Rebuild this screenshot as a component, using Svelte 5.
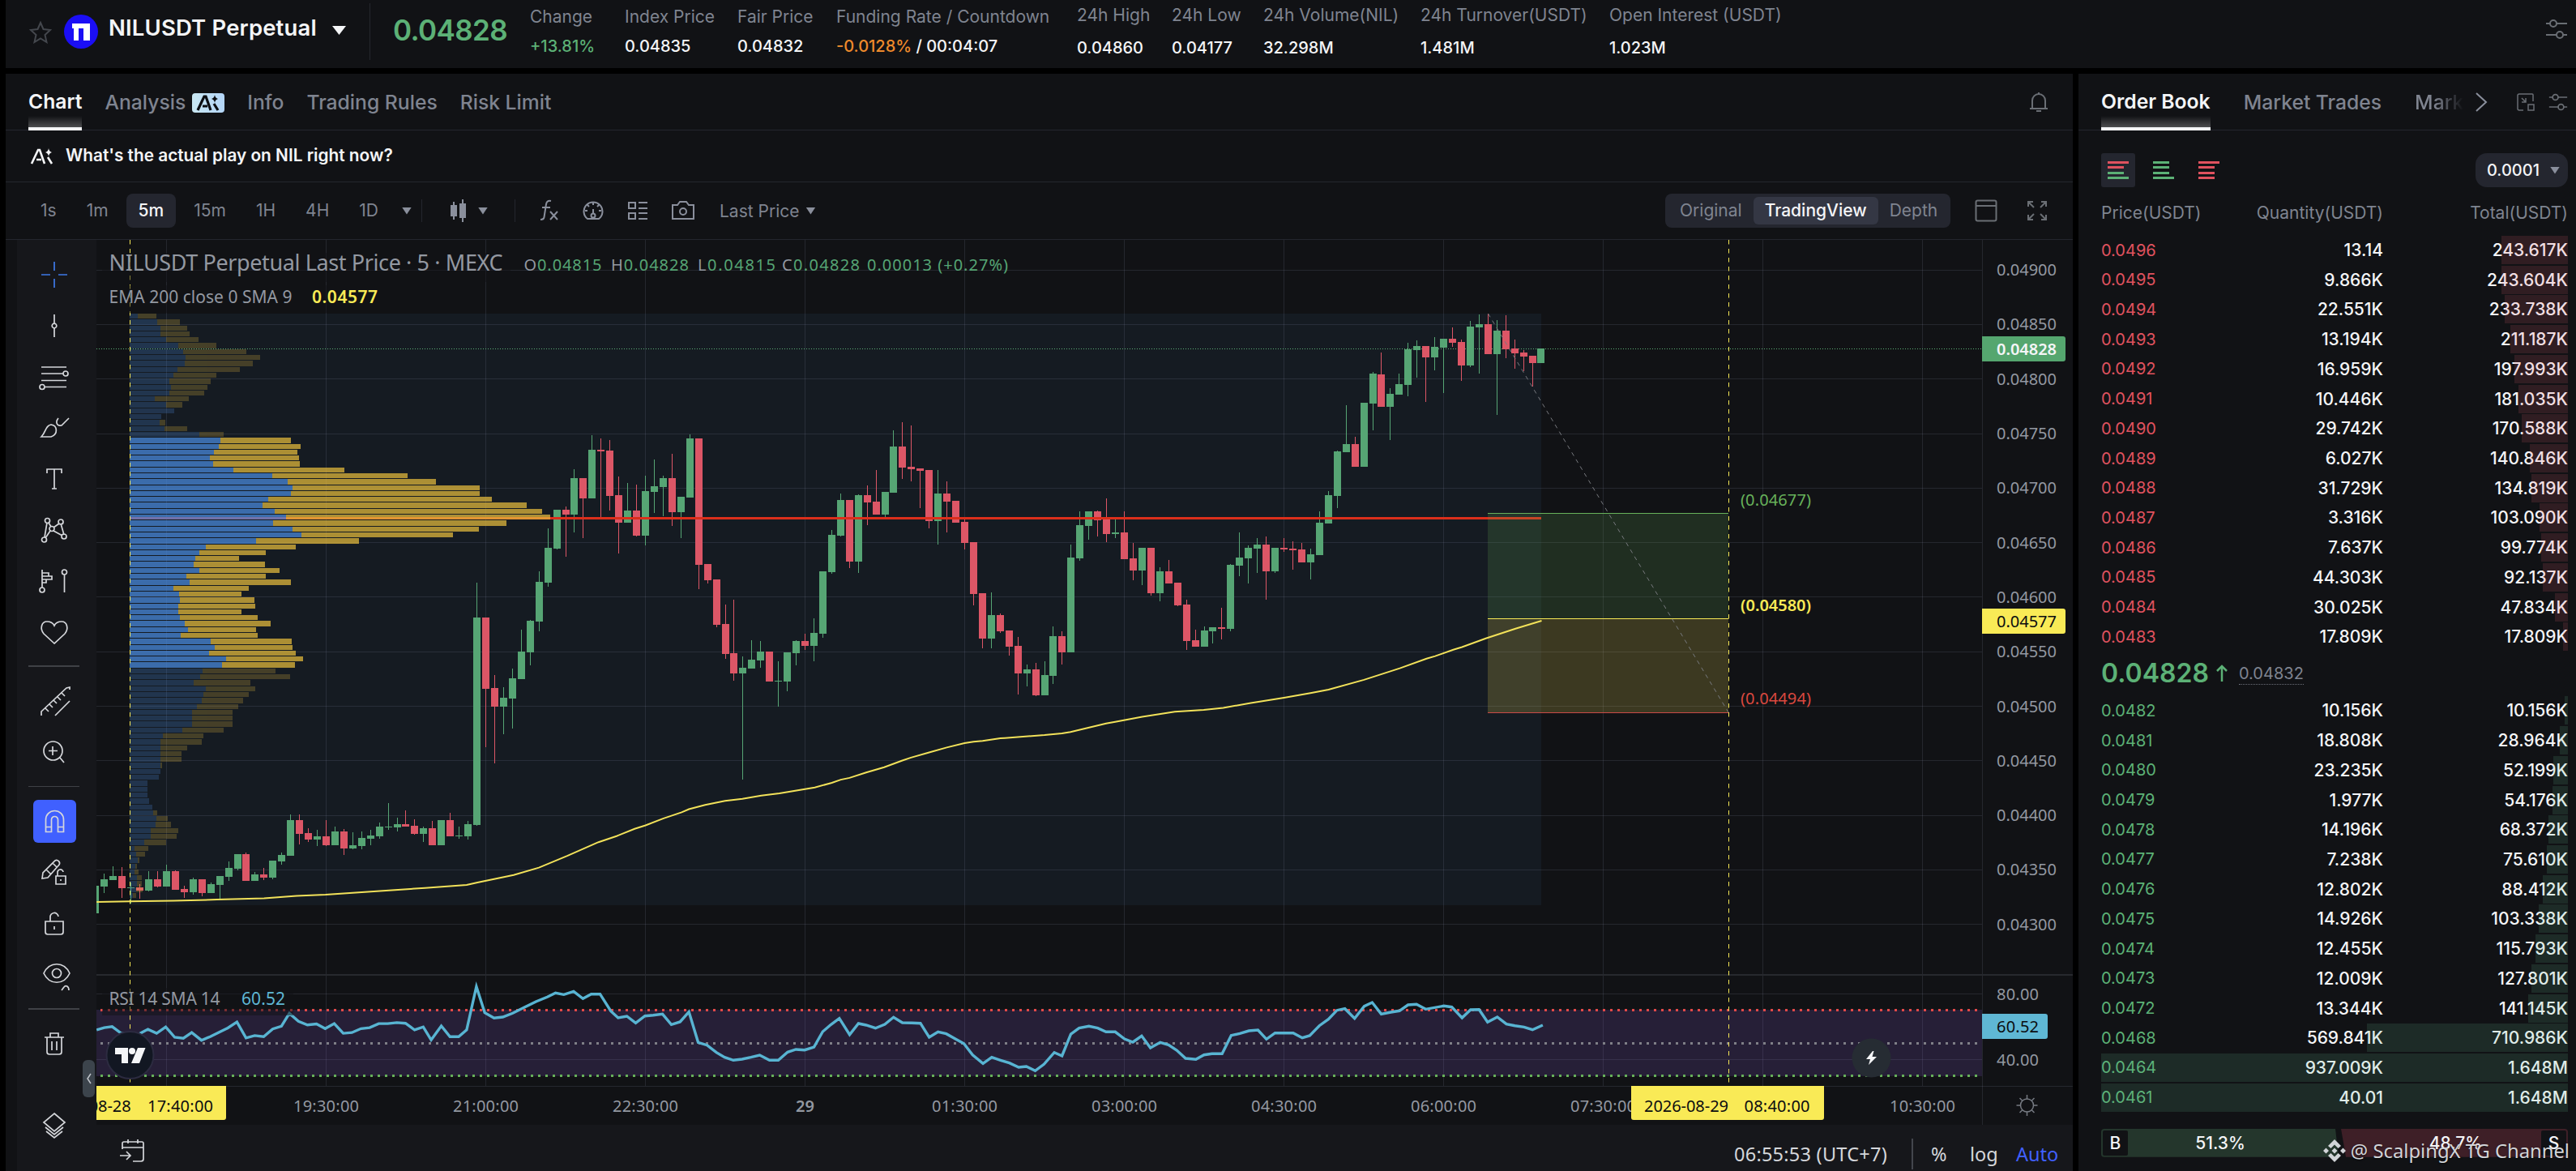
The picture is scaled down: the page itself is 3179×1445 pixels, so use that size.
<script lang="ts">
  const stats = [
    { label: 'Change', value: '+13.81%', tone: 'up' },
    { label: 'Index Price', value: '0.04835' },
    { label: 'Fair Price', value: '0.04832' },
    { label: 'Funding Rate / Countdown', rate: '-0.0128%', value: '/ 00:04:07' },
    { label: '24h High', value: '0.04860', low: true },
    { label: '24h Low', value: '0.04177', low: true },
    { label: '24h Volume(NIL)', value: '32.298M', low: true },
    { label: '24h Turnover(USDT)', value: '1.481M', low: true },
    { label: 'Open Interest (USDT)', value: '1.023M', low: true },
  ];

  const intervals = ['1s', '1m', '5m', '15m', '1H', '4H', '1D'];

  const circle = (x: number, y: number, r: number) =>
    `M${x - r} ${y}a${r} ${r} 0 1 0 ${2 * r} 0a${r} ${r} 0 1 0 ${-2 * r} 0`;

  const tools = [
    { id: 'cross', d: 'M0-16V-5M0 5V16M-16 0H-5M5 0H16' },
    { id: 'line', d: 'M0-14V-3M0 3V14' + circle(0, 0, 2.8) },
    { id: 'fib', d: 'M-16-12H15M-16-4H11M-16 4.500H15M-12 12.500H15' + circle(14, -4, 3) + circle(-15, 12.5, 3) },
    { id: 'brush', d: 'M-16 11C-10 5-11-3-4-4C4-3 5 8-4 11ZM5-12C1-7 3-2 9-3L18-12' },
    { id: 'text', d: 'M-9-7V-12H9V-7M0-12V12M-3 12H3' },
    { id: 'pattern', d: 'M-9-9L-12 9M-7-9L-4-4M-1-3L6-8M-1 1L10 7M-5 1L-11 10M8-8L12 6' + circle(-8.5, -11.5, 3) + circle(8, -10, 3) + circle(-3, -1.5, 3) + circle(-12.5, 12, 3) + circle(12, 8, 3) },
    { id: 'forecast', d: 'M-15-14V8M-15-10H-7V-6M-15-6H-3V-2H-15M-10-2V2H-15M12.500-8V14' + circle(-15, 11, 3) + circle(12.5, -11, 3) },
    { id: 'heart', d: 'M0 14L-13 2C-18-4-16-13-9-13C-5-13-2-12 0-8C2-12 5-13 9-13C16-13 18-4 13 2Z' },
    { id: 'sep' },
    { id: 'ruler', d: 'M-16 18V13L15-16L19-17V-14M1 18L19 0M-11 9L-7 13M-6 4L-2 8M-1-1L3 3M4-5L8-1M9-10L13-6' },
    { id: 'zoom', d: 'M7 7L12 13M-2-7V4M-7-1.500H4' + circle(-1.5, -1.5, 11.5) },
    { id: 'sep' },
    { id: 'magnet', d: 'M-11 13V-2A11 11 0 0 1 11-2V13H4V-2A4 4 0 0 0-4-2V13ZM-11 7H-4M4 7H11', active: true },
    { id: 'pencil', d: 'M-15 7L-14 0L1-15C4-17 8-13 6-10L-8 6ZM-10-4L-4 2M-2-12L3-7M2 4H14V14H2ZM4 4V0A3.500 3.500 0 0 1 11-1M8 8V10' },
    { id: 'lock', d: 'M-11-3H11V10Q11 13 8 13H-8Q-11 13-11 10ZM-5-3V-8A5 5 0 0 1 5-9M0 3V7' },
    { id: 'eye', d: 'M-13-2C-6-17 12-17 19-2C12 13-6 13-13-2ZM9 19L12 15M12 15C14 12 18 14 18 19' + circle(3, -2, 5.5) },
    { id: 'sep' },
    { id: 'trash', d: 'M-12-8H12M-5-8V-13H5V-8M-9-8V10Q-9 13-6 13H6Q9 13 9 10V-8M-3-3V8M3-3V8' },
    { id: 'layers', d: 'M0-15L13-4L0 7L-13-4ZM-11 2L0 11L11 2M-10 7L0 15L10 7' },
  ];

  const asks = [
    ['0.0496', '13.14', '243.617K'],
    ['0.0495', '9.866K', '243.604K'],
    ['0.0494', '22.551K', '233.738K'],
    ['0.0493', '13.194K', '211.187K'],
    ['0.0492', '16.959K', '197.993K'],
    ['0.0491', '10.446K', '181.035K'],
    ['0.0490', '29.742K', '170.588K'],
    ['0.0489', '6.027K', '140.846K'],
    ['0.0488', '31.729K', '134.819K'],
    ['0.0487', '3.316K', '103.090K'],
    ['0.0486', '7.637K', '99.774K'],
    ['0.0485', '44.303K', '92.137K'],
    ['0.0484', '30.025K', '47.834K'],
    ['0.0483', '17.809K', '17.809K'],
  ];
  const bids = [
    ['0.0482', '10.156K', '10.156K'],
    ['0.0481', '18.808K', '28.964K'],
    ['0.0480', '23.235K', '52.199K'],
    ['0.0479', '1.977K', '54.176K'],
    ['0.0478', '14.196K', '68.372K'],
    ['0.0477', '7.238K', '75.610K'],
    ['0.0476', '12.802K', '88.412K'],
    ['0.0475', '14.926K', '103.338K'],
    ['0.0474', '12.455K', '115.793K'],
    ['0.0473', '12.009K', '127.801K'],
    ['0.0472', '13.344K', '141.145K'],
    ['0.0468', '569.841K', '710.986K'],
    ['0.0464', '937.009K', '1.648M'],
    ['0.0461', '40.01', '1.648M'],
  ];
  const depth = (total: string, full: number) => {
    const k = parseFloat(total) * (total.endsWith('M') ? 1000 : 1);
    return Math.min(100, (k / full) * 100);
  };

  // candles: high, body top, body bottom, low, u(p) / d(own)
  const BAR = 10.945;
  const ZERO_X = 599.5;
  const blocks = [
    {
      from: -44, top: 800, unit: 0.4113,
      rows: '712 712 795 795 u,676 693 715 734 u,654 683 695 695 u,656 683 720 749 d,702 717 719 767 u,708 717 727 751 d,669 693 727 729 u,669 693 715 717 d,649 669 715 715 u,666 669 724 724 d,712 722 732 749 d,688 693 732 740 u,693 693 734 744 d,703 707 734 734 u,683 683 710 751 u,640 659 686 698 u,617 617 661 666 u,613 617 698 698 d,670 678 698 698 u,659 678 688 695 d,637 637 688 692 u,613 620 639 649 u,498 515 622 622 u,498 515 557 588 d,540 554 574 580 d,545 564 574 593 u,515 564 591 593 d,535 549 591 591 u,542 549 600 620 d,552 591 600 602 u,549 569 593 603 u,545 562 571 591 u,523 535 564 571 u,464 535 537 545 u,508 528 537 549 u,486 528 535 535 d,513 532 557 559 d,535 540 557 581 u,518 540 591 591 d,515 515 591 591 u,493 515 564 564 d,535 562 564 571 u,518 528 564 574 u',
    },
    {
      from: -1, top: 480, unit: 0.3571,
      rows: '669 790 1506 1508 u,790 790 1036 1238 d,988 1033 1098 1294 d,1030 1067 1098 1193 u,966 1000 1070 1173 u,832 907 1002 1002 u,798 801 910 955 u,630 666 804 837 u,482 549 669 683 u,417 417 552 554 u,406 417 434 580 d,277 308 434 496 u,308 308 378 515 d,160 210 378 378 u,171 210 216 442 d,176 213 370 420 d,302 367 462 568 d,325 420 462 462 u,330 420 507 510 d,300 353 507 540 u,244 336 356 428 u,300 308 339 440 u,224 308 426 473 d,372 372 426 515 u,157 171 375 375 u,171 171 608 692 d,605 605 661 672 d,658 658 815 823 d,745 812 916 932 d,728 913 983 1008 d,924 963 983 1350 u,868 935 966 966 u,871 907 938 963 u,907 907 1011 1011 d,941 1008 1011 1098 u,910 910 1011 1044 u,868 871 913 955 u,846 871 888 902 d,792 843 888 941 u,630 630 846 860 u,487 504 633 638 u,361 384 507 510 u,384 384 596 619 d,364 367 596 636 u,333 367 392 470 d,280 389 434 434 d,356 356 434 442 u,143 199 358 358 u,115 199 272 311 d,126 269 277 319 d,274 274 283 412 d,280 280 456 482 d,280 361 456 538 u,319 361 389 496 d,386 386 462 462 d,448 459 532 554 d,529 529 708 748 d,706 706 862 896 d,703 781 862 896 u,776 781 837 843 d,834 834 890 921 d,857 888 983 1056 d,952 969 983 1028 u,946 969 1058 1061 d,941 988 1058 1058 u,820 854 991 1019 u,837 854 910 952 d,538 582 910 910 u,423 470 585 594 u,423 423 473 521 u,420 423 454 510 d,378 449 501 529 d,448 496 501 515 u,423 496 588 588 d,532 585 627 661 d,549 549 627 678 u,549 549 706 714 d,616 630 706 734 u,591 630 672 672 d,669 669 748 750 d,728 745 871 902 d,832 868 890 890 d,820 834 890 890 u,823 823 837 879 u,756 823 829 865 d,605 608 829 837 u,496 582 610 647 u,540 549 585 672 u,515 538 552 636 u,510 538 630 728 d,549 549 630 636 u,515 549 554 563 d,526 552 557 624 d,532 554 599 599 d,552 571 599 658 u,423 462 574 574 u,353 367 465 465 u,213 216 370 412 u,56 190 218 218 u,165 190 269 269 d,48 48 269 269 u,-60 -52 50 143 u',
    },
    {
      from: 101, top: 360, unit: 0.3571,
      rows: '210 286 398 398 d,333 353 398 512 u,283 319 356 356 u,176 199 322 361 u,168 188 202 297 u,188 188 227 381 d,157 190 227 272 u,162 162 193 350 u,123 162 176 190 d,165 174 255 308 d,101 120 255 260 u,78 112 123 283 u,76 112 216 216 d,98 134 216 426 u,81 134 199 230 d,165 196 213 266 d,202 210 224 274 d,221 221 246 328 d,196 196 246 246 u',
    },
  ];
  const candles = blocks.flatMap((b) =>
    b.rows.split(',').map((row, n) => {
      const parts = row.split(' ');
      const [high, open, close, low] = parts.slice(0, 4).map((v) => Math.round(b.top + Number(v) * b.unit));
      return { x: Math.floor(ZERO_X + (b.from + n) * BAR), high, open, close, low, up: parts[4] === 'u' };
    })
  );

  // volume profile rows: end of the buy part, end of the whole bar
  const profile =
    '381 432,435 497,444 517,444 524,459 549,493 598,506 681,513 719,511 699,491 663,479 598,468 582,473 573,468 564,428 522,459 504,482 482,446 446,441 457,455 517,551 618,609 804,605 831,591 822,580 827,589 829,645 952,753 1127,795 1205,809 1326,804 1326,741 1360,726 1456,759 1499,791 1521,755 1400,809 1324,833 1252,708 992,569 818,551 735,540 661,535 732,551 773,515 735,524 804,479 688,495 668,497 703,493 706,493 668,497 712,511 748,520 708,500 712,582 806,594 809,578 818,625 838,614 815,560 762,553 802,535 692,569 706,562 688,558 672,544 659,531 643,531 643,531 643,504 618,450 562,444 558,444 517,444 502,444 502,444 448,444 444,439 439,408 408,408 408,408 408,412 412,421 421,423 435,432 464,430 473,417 493,417 488,399 459,372 410,376 401,381 385,374 379,372 383,379 392,379 392,376 394,367 376'
      .split(',')
      .map((row, n) => {
        const [buy, all] = row.split(' ').map((v) => Math.round(Number(v) * 0.4464));
        const y = Math.round(387 + n * 7.296);
        const next = Math.round(387 + (n + 1) * 7.296);
        return { y, h: next - y - 1, buy, all, value: n >= 21 && n <= 59 };
      });

  const trace = (pts: string, ox: number, oy: number, sx: number, sy: number) =>
    pts
      .split(' ')
      .map((p) => p.split(',').map(Number))
      .map(([x, y]) => `${(ox + x * sx).toFixed(1)},${(oy + y * sy).toFixed(1)}`)
      .join(' ');

  const ema = [
    trace('267,761 360,759 480,757 600,754 730,750 820,743 900,739 1050,728 1175,719 1290,710 1320,703 1420,680 1490,658 1568,623', 0, 800, 0.4464, 0.4113),
    trace('400,1566 450,1545 500,1520 530,1508 580,1484 630,1463 650,1452 695,1437 750,1423 798,1416 850,1405 900,1397 998,1377 1045,1361 1070,1350 1094,1344 1140,1325 1190,1307 1240,1284 1264,1274 1314,1256 1363,1239 1412,1224 1437,1219 1462,1216 1511,1207', 560, 480, 0.4464, 0.3571),
    trace('0,1206 110,1196 158,1190 182,1185 280,1156 305,1150 380,1133 470,1115 550,1109 604,1102 680,1085 772,1067 845,1051 895,1039 993,1005 1092,965 1166,932 1190,923 1240,901 1264,892 1330,862 1412,828 1484,801', 1240, 480, 0.4464, 0.3571),
  ].join(' ');

  const rsi = [
    trace('267,1145 288,1138 310,1135 335,1155 360,1155 384,1157 409,1143 433,1155 458,1136 483,1167 507,1170 530,1153 557,1176 581,1165 606,1152 630,1139 655,1121 680,1169 704,1162 729,1165 754,1142 778,1134 800,1095 825,1119 850,1130 875,1127 899,1141 924,1126 949,1155 973,1153 998,1141 1022,1138 1047,1126 1072,1126 1097,1123 1121,1125 1146,1145 1170,1136 1192,1175 1220,1133 1244,1165 1268,1165 1290,1145 1317,1015 1340,1093', 0, 800, 0.4464, 0.4113),
    trace('172,229 189,225 208,211 230,190 253,168 275,151 291,136 307,142 326,130 344,157 360,140 377,140 398,203 412,228 429,222 446,247 464,221 480,218 498,214 515,253 532,243 549,206 567,319 584,329 602,356 618,374 635,385 652,381 669,374 686,366 705,385 722,385 740,355 756,345 773,347 791,336 808,279 824,253 840,230 860,290 877,249 892,255 910,266 928,252 945,226 962,246 980,247 997,248 1014,300 1031,280 1047,287 1064,305 1081,323 1098,365 1118,397 1135,374 1152,385 1169,395 1187,411 1202,408 1219,424 1236,400 1256,356 1271,369 1288,288 1304,266 1323,259 1340,266 1356,280 1374,280 1392,306 1408,318 1425,295 1442,339 1461,319 1477,328 1493,348 1510,378 1530,382', 500, 1180, 0.6378, 0.3333),
    trace('51,425 65,421 83,421 99,353 114,346 130,336 146,333 161,367 176,344 208,344 224,362 237,354 254,317 270,293 285,260 299,254 316,290 333,245 347,231 363,274 380,267 395,262 410,240 425,238 441,256 473,244 487,248 505,288 520,258 535,257 550,304 567,285 583,311 598,317 614,322 629,332 647,315', 1450, 1160, 0.7015, 0.3333),
  ].join(' ');

  const priceY = (p: number) => 333.2 + (4900 - p) * 1.3458;
  const priceTicks = Array.from({ length: 13 }, (_, n) => 4900 - n * 50);
  const timeTicks = ['', '19:30:00', '21:00:00', '22:30:00', '29', '01:30:00', '03:00:00', '04:30:00', '06:00:00', '07:30:00', '', '10:30:00'].map(
    (label, n) => ({ label, x: Math.floor(ZERO_X + (n - 2) * BAR * 18) + 0.5 })
  );
  const ohlc = [
    { k: 'O', v: '0.04815', x: 646.5 },
    { k: 'H', v: '0.04828', x: 754 },
    { k: 'L', v: '0.04815', x: 861 },
    { k: 'C', v: '0.04828', x: 965 },
  ];
</script>

{#snippet caret()}
  <span class="caret"></span>
{/snippet}

{#snippet sliders()}
  <svg class="icon" width="28" height="28" viewBox="0 0 28 28">
    <path d="M1 7H7M13 7H27M1 21H15M21 21H27" />
    <circle cx="10" cy="7" r="4" /><circle cx="18" cy="21" r="4" />
  </svg>
{/snippet}

{#snippet aiMark()}
  <svg class="ai" width="30" height="20" viewBox="0 0 30 20">
    <path d="M2 19L10 2H12L18 19M8 14H14M22 11L27 19" />
    <path class="spark" d="M23 0Q23.500 4 27 5Q23.500 6 23 10Q22.500 6 19 5Q22.500 4 23 0Z" />
  </svg>
{/snippet}

{#snippet bookRow(row: string[], side: string)}
  <div class="row {side}">
    <span class="price">{row[0]}</span>
    <span>{row[1]}</span>
    <span>{row[2]}</span>
    <i style="width: {depth(row[2], side === 'ask' ? 1720 : 1648)}%"></i>
  </div>
{/snippet}

<div class="page">
  <header>
    <svg class="star" width="28" height="28" viewBox="0 0 28 28"><path d="M14 2L17.500 10L26 11L19.500 17L21.500 26L14 21.500L6.500 26L8.500 17L2 11L10.500 10Z" /></svg>
    <svg class="coin" width="42" height="42" viewBox="0 0 42 42">
      <circle cx="21" cy="21" r="21" />
      <path d="M10 11H32V32H24V17H18V32H12V17H10Z" />
    </svg>
    <h1>NILUSDT Perpetual</h1>
    {@render caret()}
    <div class="last">0.04828</div>
    <div class="stats">
      {#each stats as s}
        <div class="stat" class:low={s.low}>
          <span class="label">{s.label}</span>
          <span class="value {s.tone ?? ''}">{#if s.rate}<em>{s.rate}</em>&nbsp;{/if}{s.value}</span>
        </div>
      {/each}
    </div>
    <div class="end">{@render sliders()}</div>
  </header>

  <main>
    <nav class="tabs">
      <span class="tab on">Chart</span>
      <span class="tab">Analysis <b class="badge">{@render aiMark()}</b></span>
      <span class="tab">Info</span>
      <span class="tab">Trading Rules</span>
      <span class="tab">Risk Limit</span>
      <svg class="icon bell" width="28" height="28" viewBox="0 0 28 28">
        <path d="M14 2V4M3 22H25M6 22V12A8 8 0 0 1 22 12V22M11 25H17" />
      </svg>
    </nav>
    <div class="ask-ai">{@render aiMark()}<span>What's the actual play on NIL right now?</span></div>

    <div class="toolbar">
      {#each intervals as t}
        <span class="interval" class:on={t === '5m'}>{t}</span>
      {/each}
      <span class="more">{@render caret()}</span>
      <span class="rule"></span>
      <svg class="fill kind" width="22" height="30" viewBox="0 0 22 30">
        <path d="M1 8H9V22H1ZM4 4H6V26H4ZM12 6H20V24H12ZM15 1H17V29H15Z" />
      </svg>
      {@render caret()}
      <span class="rule second"></span>
      <svg class="icon fx" width="26" height="28" viewBox="0 0 26 28">
        <path d="M15 2Q10 1 9 6L6.500 22Q6 25 2 25M4 10H14M14 15L23 25M23 15L14 25" />
      </svg>
      <svg class="icon lit" width="28" height="28" viewBox="0 0 28 28">
        <path d="M7 24A11.500 11.500 0 1 1 21 24ZM14 12V18M14 4V7M4 14H7M21 14H24M7 7L9 9M21 7L19 9" /><circle cx="14" cy="20" r="2.500" />
      </svg>
      <svg class="icon lit" width="28" height="28" viewBox="0 0 28 28">
        <path d="M3 4H11V11H3ZM3 17H11V24H3ZM15 4H26M15 11H26M15 17H26M15 24H26" />
      </svg>
      <svg class="icon cam" width="30" height="28" viewBox="0 0 30 28">
        <path d="M2 7H8L11 3H19L22 7H28V24H2Z" /><circle cx="15" cy="15" r="4" />
      </svg>
      <span class="source">Last Price</span>
      {@render caret()}
      <div class="modes">
        <span>Original</span><span class="on">TradingView</span><span>Depth</span>
      </div>
      <svg class="icon pane" width="28" height="28" viewBox="0 0 28 28"><rect x="1.500" y="1.500" width="25" height="25" rx="2" /><path d="M1 8H27" /></svg>
      <svg class="icon full" width="28" height="28" viewBox="0 0 28 28">
        <path d="M10 10L3 3M3 9V3H9M18 10L25 3M19 3H25V9M10 18L3 25M3 19V25H9M18 18L25 25M25 19V25H19" />
      </svg>
    </div>

    <div class="chart">
      <aside>
        {#each tools as t}
          {#if t.id === 'sep'}
            <hr />
          {:else}
            <div class="tool {t.id}" class:active={t.active}>
              <svg width="44" height="44" viewBox="-22 -22 44 44"><path d={t.d} /></svg>
            </div>
          {/if}
        {/each}
        <div class="handle"><svg width="8" height="14" viewBox="0 0 8 14"><path d="M6 1L2 7L6 13" /></svg></div>
      </aside>

      <div class="panes">
        <svg class="plot" width="2439" height="1092" viewBox="119 296 2439 1092">
          <rect class="cover" x="160" y="387" width="1742" height="730" />

          <g class="grid">
            {#each priceTicks as p}
              <path d="M119 {Math.floor(priceY(p)) + 0.5}H2446" />
            {/each}
            {#each timeTicks as t}
              <path d="M{t.x} 296V1340" />
            {/each}
            <path d="M119 1226.500H2446M119 1307.500H2446" />
          </g>
          <path class="edge" d="M2446.500 296V1388M119 1340.500H2558" />
          <path class="split" d="M119 1203H2558" />

          <path class="now" d="M119 430.500H2446" />
          {#each candles as c}
            <g class={c.up ? 'up' : 'down'}>
              <rect x={c.x} y={c.high} width="1" height={Math.max(1, c.low - c.high)} />
              <rect x={c.x - 4} y={c.open} width="9" height={Math.max(1, c.close - c.open)} />
            </g>
          {/each}
          <rect class="poc" x="160" y="638" width="1742" height="3" />
          {#each profile as v}
            <g class="vp" class:value={v.value}>
              <rect class="buy" x="160" y={v.y} width={v.buy - 160} height={v.h} />
              <rect class="sell" x={v.buy} y={v.y} width={v.all - v.buy} height={v.h} />
            </g>
          {/each}
          <polyline class="ema" points={ema} />

          <rect class="profit" x="1836" y="633" width="297" height="130" />
          <rect class="loss" x="1836" y="763" width="297" height="116" />
          <path class="target" d="M1836 633.500H2133" />
          <path class="entry" d="M1836 763.500H2133" />
          <path class="stop" d="M1836 879.500H2133" />
          <path class="path" d="M1836.500 387L2133 879" />

          <rect class="band" x="119" y="1246" width="2327" height="82" />
          <path class="dots hi" d="M124 1246.500H2446" />
          <path class="dots mid" d="M124 1287.500H2446" />
          <path class="dots lo" d="M124 1327.500H2446" />
          <polyline class="rsi" points={rsi} />

          <path class="marker" d="M160.500 296V1340M2133.500 296V1340" />

          <rect class="veil" x="126" y="312" width="504" height="36" />
          <rect class="veil" x="126" y="352" width="350" height="34" />
          <rect class="veil" x="126" y="1219" width="236" height="34" />

          <text class="title" x="134.500" y="334" textLength="486">NILUSDT Perpetual Last Price · 5 · MEXC</text>
          {#each ohlc as o}
            <text class="s20" x={o.x} y="334" textLength="96">{o.k}<tspan class="up">{o.v}</tspan></text>
          {/each}
          <text class="s20 up" x="1070" y="334" textLength="174">0.00013 (+0.27%)</text>
          <text class="s21" x="134.500" y="374" textLength="226">EMA 200 close 0 SMA 9</text>
          <text class="s21 yellow strong" x="385" y="374" textLength="81">0.04577</text>
          <text class="s21" x="134.500" y="1240" textLength="137">RSI 14 SMA 14</text>
          <text class="s21 cyan" x="298" y="1240" textLength="54">60.52</text>

          <text class="s20 gain" x="2148" y="623.500" textLength="87">(0.04677)</text>
          <text class="s20 yellow strong" x="2148" y="753.500" textLength="87">(0.04580)</text>
          <text class="s20 lose" x="2148" y="869" textLength="87">(0.04494)</text>

          {#each priceTicks as p}
            <text class="s20" x="2464" y={priceY(p) + 7} textLength="74">{(p / 100000).toFixed(5)}</text>
          {/each}
          <text class="s20" x="2464" y="1234" textLength="52">80.00</text>
          <text class="s20" x="2464" y="1315" textLength="52">40.00</text>
          {#each timeTicks as t}
            {#if t.label === '29'}
              <text class="s20 strong mid" x={t.x} y="1371.500">29</text>
            {:else if t.label}
              <text class="s20" x={t.x - 40.5} y="1371.500" textLength="81">{t.label}</text>
            {/if}
          {/each}

          <path class="tag-up" d="M2446 415H2546Q2549 415 2549 418V443Q2549 446 2546 446H2446Z" />
          <text class="s20 white strong" x="2464" y="438" textLength="74">0.04828</text>
          <path class="tag-ema" d="M2446 751H2546Q2549 751 2549 754V779Q2549 782 2546 782H2446Z" />
          <text class="s20 black" x="2464" y="774" textLength="74">0.04577</text>
          <path class="tag-rsi" d="M2446 1251H2524Q2527 1251 2527 1254V1279Q2527 1282 2524 1282H2446Z" />
          <text class="s20 black" x="2464" y="1274" textLength="52">60.52</text>

          <path class="tag-ema" d="M119 1340H279V1379Q279 1382 276 1382H119Z" />
          <text class="s20 black" x="57.700" y="1371.500" textLength="104">2026-08-28</text>
          <text class="s20 black" x="182" y="1371.500" textLength="81">17:40:00</text>
          <path class="tag-ema" d="M2013 1340H2251V1379Q2251 1382 2248 1382H2016Q2013 1382 2013 1379Z" />
          <text class="s20 black" x="2029" y="1371.500" textLength="104">2026-08-29</text>
          <text class="s20 black" x="2152.500" y="1371.500" textLength="81">08:40:00</text>

          <circle class="tv" cx="160.500" cy="1302" r="29" />
          <path class="tv-mark" d="M142 1293H158V1312H150V1301H142ZM170 1293H179.500L172 1312H162Z" />
          <circle class="tv-mark" cx="163" cy="1297" r="4" />

          <circle class="flash" cx="2309.500" cy="1305.500" r="24" />
          <path class="bolt" d="M2311 1297L2303 1307H2308L2306 1314L2316 1304H2310.500L2312.500 1297Z" />

          <g class="gear" transform="translate(2501.5 1364)">
            <circle r="8" />
            <path d="M0-8V-13M0 8V13M-8 0H-13M8 0H13M-6-6L-9-9M6-6L9-9M-6 6L-9 9M6 6L9 9" />
          </g>
        </svg>

        <footer>
          <svg class="goto" width="32" height="30" viewBox="0 0 32 30">
            <path d="M4 13V6Q4 4 6 4H28Q30 4 30 6V25Q30 28 27 28H17M4 11H30M11 1V6M23 1V6M1 21H14M9 16L14 21L9 26" />
          </svg>
          <span class="clock">06:55:53 (UTC+7)</span>
          <span class="bar"></span>
          <span class="pct">%</span>
          <span class="log">log</span>
          <span class="auto">Auto</span>
        </footer>
      </div>
    </div>
  </main>

  <section class="book">
    <nav class="tabs">
      <span class="tab on">Order Book</span>
      <span class="tab">Market Trades</span>
      <span class="tab cut">Mark</span>
      <svg class="icon chev" width="16" height="26" viewBox="0 0 16 26"><path d="M2 2L14 13L2 24" /></svg>
      <svg class="icon thin" width="24" height="24" viewBox="0 0 24 24">
        <path d="M21 11V3Q21 2 20 2H4Q2 2 2 4V20Q2 22 4 22H9M7 7L12 12M12 7V12H7M15 15H22V22H15Z" />
      </svg>
      {@render sliders()}
    </nav>

    <div class="filters">
      <span class="sides on"><i class="r"></i><i class="r s"></i><i class="g s"></i><i class="g"></i></span>
      <span class="sides"><i class="g s"></i><i class="g s"></i><i class="g s"></i><i class="g"></i></span>
      <span class="sides"><i class="r"></i><i class="r s"></i><i class="r s"></i><i class="r s"></i></span>
      <span class="step">0.0001 {@render caret()}</span>
    </div>

    <div class="row head"><span>Price(USDT)</span><span>Quantity(USDT)</span><span>Total(USDT)</span></div>
    <div class="rows asks">
      {#each asks as row}
        {@render bookRow(row, 'ask')}
      {/each}
    </div>
    <div class="mid-price">
      <strong>0.04828</strong>
      <svg width="16" height="22" viewBox="0 0 16 22"><path d="M8 21V2M2 8L8 2L14 8" /></svg>
      <span>0.04832</span>
    </div>
    <div class="rows">
      {#each bids as row}
        {@render bookRow(row, 'bid')}
      {/each}
    </div>

    <div class="ratio">
      <div class="buy-side"><b>B</b><span>51.3%</span></div>
      <div class="sell-side"><span>48.7%</span><b>S</b></div>
    </div>
  </section>

  <div class="watermark">
    <svg width="28" height="28" viewBox="0 0 28 28">
      <path d="M14 0L22 8L18.500 11L14 6.500L9.500 11L6 8ZM14 28L22 20L18.500 17L14 21.500L9.500 17L6 20ZM14 10.500L17.500 14L14 17.500L10.500 14ZM3.500 10.500L7 14L3.500 17.500L0 14ZM24.500 10.500L28 14L24.500 17.500L21 14Z" />
    </svg>
    <span>@ ScalpingX TG Channel</span>
  </div>
</div>

<style>
  :global(body) {
    background: #000;
  }

  .page {
    position: relative;
    display: grid;
    grid-template: 84px 1354px / 2551px 614px;
    column-gap: 7px;
    row-gap: 7px;
    width: 3179px;
    height: 1445px;
    padding-left: 7px;
    box-sizing: border-box;
    overflow: hidden;
    background: #000;
    color: #7f8490;
    font-family: Inter, sans-serif;
    font-size: 21px;
    line-height: 1;
  }

  svg {
    display: block;
    flex: none;
  }

  .icon {
    fill: none;
    stroke: #6a6e74;
    stroke-width: 2;
  }

  .thin {
    stroke-width: 1.5;
  }

  .fill {
    fill: #8a8f9c;
  }

  .caret {
    width: 12px;
    height: 9px;
    background: #8a8f9c;
    clip-path: polygon(0 0, 100% 0, 50% 100%);
  }

  /* header */
  header {
    grid-column: 1 / 3;
    display: flex;
    align-items: flex-start;
    background: #111215;
  }

  .star {
    margin: 26px 0 0 29px;
    fill: none;
    stroke: #44474d;
    stroke-width: 2;
  }

  .coin {
    margin: 18px 0 0 15px;
    fill: #1b0ef5;
  }

  .coin path {
    fill: #fff;
  }

  h1 {
    width: 260px;
    margin: 21px 0 0 13px;
    color: #f4f5f7;
    font-size: 27.5px;
    font-weight: 600;
    letter-spacing: 0.15px;
    white-space: nowrap;
  }

  header > .caret {
    width: 17px;
    height: 11px;
    margin: 32px 0 0 16px;
    background: #f4f5f7;
  }

  .last {
    width: 168px;
    height: 70px;
    margin: 4px 0 0 29px;
    padding: 16px 0 0 28px;
    box-sizing: border-box;
    border-left: 1px solid #25272d;
    color: #5cb176;
    font-size: 35px;
    font-weight: 600;
    letter-spacing: -0.6px;
  }

  .stats {
    display: grid;
    grid-template-columns: 117px 139px 122px 297px 117px 113px 194px 233px 230px;
    margin-left: 30px;
  }

  .stat {
    display: flex;
    flex-direction: column;
    gap: 16px;
    padding-top: 10px;
    white-space: nowrap;
  }

  .stat.low {
    gap: 20px;
    padding-top: 8px;
  }

  .stat .value {
    color: #f4f5f7;
    font-size: 20px;
    font-weight: 500;
  }

  .stat .value.up {
    color: #5cb176;
  }

  .stat em {
    color: #ee8a2c;
    font-style: normal;
  }

  .end {
    margin: 22px 10px 0 auto;
  }

  /* main panel */
  main,
  .book {
    display: flex;
    flex-direction: column;
    background: #111215;
  }

  .tabs {
    display: flex;
    align-items: center;
    gap: 28px;
    height: 70px;
    padding: 0 28px;
    box-sizing: border-box;
    border-bottom: 1px solid #24262e;
    font-size: 24.7px;
    font-weight: 500;
  }

  .tab {
    display: flex;
    align-items: center;
    gap: 8px;
    height: 70px;
    box-sizing: border-box;
    padding-top: 2px;
    white-space: nowrap;
  }

  .tab.on {
    border-bottom: 4px solid #f4f5f7;
    padding-top: 4px;
    background: linear-gradient(to top, rgba(255, 255, 255, 0.25), transparent 14px);
    color: #f4f5f7;
    font-weight: 600;
  }

  .badge {
    display: flex;
    align-items: center;
    justify-content: center;
    width: 40px;
    height: 24px;
    border-radius: 4px;
    background: linear-gradient(90deg, #c9e7f2, #b3d5f8);
  }

  .ai {
    fill: none;
    stroke: #f4f5f7;
    stroke-width: 2.6;
  }

  .ai .spark {
    fill: #f4f5f7;
    stroke: none;
  }

  .badge .ai {
    stroke: #0c0e12;
    stroke-width: 3.2;
  }

  .badge .ai .spark {
    fill: #0c0e12;
  }

  .bell {
    margin-left: auto;
  }

  .ask-ai {
    display: flex;
    align-items: center;
    gap: 14px;
    height: 64px;
    padding-left: 30px;
    box-sizing: border-box;
    border-bottom: 1px solid #24262e;
    color: #f4f5f7;
    font-size: 20.8px;
    font-weight: 600;
  }

  .toolbar {
    display: flex;
    align-items: center;
    height: 71px;
    padding-left: 28px;
    box-sizing: border-box;
    border-bottom: 1px solid #24262e;
  }

  .interval {
    height: 42px;
    margin-right: 7px;
    padding: 0 15px;
    border-radius: 8px;
    line-height: 42px;
  }

  .interval.on {
    background: #24262f;
    color: #f4f5f7;
    font-weight: 500;
  }

  .more {
    display: flex;
    margin: 0 12px 0 7px;
  }

  .rule {
    width: 1px;
    height: 28px;
    margin-right: 34px;
    background: #24262e;
  }

  .kind {
    margin-right: 13px;
  }

  .rule.second {
    margin: 0 29px 0 33px;
  }

  .toolbar > .icon {
    margin-right: 27px;
  }

  .toolbar > .fx,
  .toolbar > .lit,
  .toolbar > .cam {
    stroke: #8a8f9c;
  }

  .toolbar > .source {
    margin: 0 8px 0 3px;
  }

  .modes {
    display: flex;
    align-items: center;
    width: 352px;
    height: 42px;
    margin-left: auto;
    padding: 4px;
    box-sizing: border-box;
    border-radius: 8px;
    background: #24262f;
  }

  .modes span {
    padding: 0 14px;
    border-radius: 6px;
    line-height: 34px;
  }

  .modes .on {
    background: #343744;
    color: #f4f5f7;
    font-weight: 500;
  }

  .toolbar > .pane {
    margin: 0 35px 0 30px;
  }

  .toolbar > .full {
    margin-right: 30px;
  }

  .chart {
    display: flex;
    flex: 1;
  }

  aside {
    position: relative;
    width: 98px;
    margin-left: 14px;
    padding: 11px 6px 0 0;
    box-sizing: border-box;
    background: #16171b;
  }

  .tool {
    display: flex;
    align-items: center;
    justify-content: center;
    height: 63px;
    fill: none;
    stroke: #d5d7db;
    stroke-width: 1.7;
  }

  .tool.cross {
    stroke: #3e7ae8;
  }

  .tool.layers {
    margin-top: 38px;
  }

  .tool.active svg {
    width: 53px;
    height: 53px;
    padding: 4.5px;
    box-sizing: border-box;
    border-radius: 6px;
    background: #4060ff;
  }

  hr {
    width: 63px;
    height: 1.5px;
    margin: 10px 0 11px 14px;
    border: 0;
    background: #3f4146;
  }

  .handle {
    position: absolute;
    top: 1012px;
    left: 81px;
    display: flex;
    align-items: center;
    justify-content: center;
    width: 15px;
    height: 46px;
    border-radius: 6px;
    background: #3c444c;
  }

  .handle path {
    fill: none;
    stroke: #c0c4ca;
    stroke-width: 1.5;
  }

  .panes {
    width: 2439px;
  }

  /* plot */
  .plot {
    font-family: 'Trebuchet MS', 'Noto Sans', sans-serif;
    fill: #9398a1;
  }

  .cover {
    fill: #151b22;
  }

  .grid path,
  .edge {
    stroke: rgba(140, 150, 180, 0.16);
  }

  .split {
    stroke: #27292e;
    stroke-width: 2;
  }

  .now {
    stroke: #5cb176;
    stroke-dasharray: 1 2;
  }

  .up {
    fill: #56a574;
  }

  .down {
    fill: #dc5666;
  }

  .poc {
    fill: #db2f1b;
  }

  .buy {
    fill: #4a8bde;
  }

  .sell {
    fill: #e5ba3c;
  }

  .vp {
    opacity: 0.23;
  }

  .vp.value {
    opacity: 0.73;
  }

  .ema {
    fill: none;
    stroke: #f2e25a;
    stroke-width: 2;
  }

  .profit {
    fill: rgba(103, 177, 90, 0.18);
  }

  .loss {
    fill: rgba(250, 230, 86, 0.19);
  }

  .target {
    stroke: #67b15a;
  }

  .entry {
    stroke: #f9ea56;
  }

  .stop {
    stroke: #c94a48;
  }

  .path {
    stroke: #77797e;
    stroke-dasharray: 5 5;
  }

  .band {
    fill: rgba(126, 87, 194, 0.2);
  }

  .dots {
    stroke-width: 3;
    stroke-dasharray: 3 6;
  }

  .hi {
    stroke: #e24a48;
  }

  path.mid {
    stroke: #7f7f87;
  }

  .lo {
    stroke: #67b15a;
  }

  .rsi {
    fill: none;
    stroke: #58b4d2;
    stroke-width: 3.4;
  }

  .marker {
    stroke: #f9ea56;
    stroke-dasharray: 5.5 5.5;
  }

  .veil {
    fill: rgba(17, 18, 21, 0.5);
  }

  .title {
    font-size: 27px;
  }

  .s20 {
    font-size: 20px;
  }

  .s21 {
    font-size: 21px;
  }

  .strong {
    font-weight: 600;
  }

  text.mid {
    text-anchor: middle;
  }

  .yellow,
  .tag-ema {
    fill: #f9ea56;
  }

  .cyan,
  .tag-rsi {
    fill: #5fb7d4;
  }

  .gain {
    fill: #67b15a;
  }

  .lose {
    fill: #d9483f;
  }

  .white,
  .tv-mark,
  .bolt {
    fill: #f4f5f7;
  }

  .black {
    fill: #0c0d10;
  }

  .tag-up {
    fill: #55a66f;
  }

  .tv {
    fill: #121722;
    stroke: #2c2b40;
    stroke-width: 2;
  }

  .flash {
    fill: #262c33;
  }

  .gear {
    fill: none;
    stroke: #777b83;
    stroke-width: 1.5;
  }

  footer {
    display: flex;
    align-items: center;
    height: 57px;
    padding-top: 15px;
    box-sizing: border-box;
    background: #16171b;
    color: #d5d7db;
    font-family: 'Trebuchet MS', 'Noto Sans', sans-serif;
    font-size: 23.5px;
    line-height: 30px;
  }

  .goto {
    margin: -8px 0 0 28px;
    fill: none;
    stroke: #d5d7db;
    stroke-width: 1.7;
  }

  .clock {
    width: 190px;
    margin-left: auto;
    letter-spacing: 0.25px;
    white-space: nowrap;
  }

  .bar {
    width: 2px;
    height: 38px;
    margin: 0 22px 0 29px;
    background: #43464d;
  }

  .pct {
    width: 48px;
  }

  .log {
    width: 57px;
  }

  .auto {
    width: 70px;
    color: #4060ff;
  }

  /* order book */
  .book .tabs {
    gap: 0;
    padding: 0 10px 0 28px;
  }

  .book .tab + .tab {
    margin-left: 41px;
  }

  .cut {
    width: 60px;
    -webkit-mask-image: linear-gradient(90deg, #000 40%, transparent);
    mask-image: linear-gradient(90deg, #000 40%, transparent);
  }

  .chev {
    margin: 0 auto 0 14px;
    stroke: #8a8f9c;
  }

  .thin {
    margin-right: 16px;
  }

  .book .tabs .icon:last-child {
    width: 24px;
    height: 24px;
  }

  .filters {
    display: flex;
    align-items: center;
    gap: 14px;
    margin: 28px 10px 0 28px;
  }

  .sides {
    display: flex;
    flex-direction: column;
    gap: 3.4px;
    width: 42px;
    height: 42px;
    padding: 10px 8px;
    box-sizing: border-box;
    border-radius: 3px;
  }

  .sides.on {
    background: #24262f;
  }

  .sides i {
    width: 26px;
    height: 3px;
  }

  .sides i.s {
    width: 20px;
  }

  .r {
    background: #e0525f;
  }

  .g {
    background: #5cb176;
  }

  .step {
    display: flex;
    align-items: center;
    justify-content: space-between;
    width: 114px;
    height: 42px;
    margin-left: auto;
    padding: 0 10px 0 14px;
    box-sizing: border-box;
    border-radius: 14px;
    background: #24262f;
    color: #f4f5f7;
    font-size: 20px;
    font-weight: 500;
  }

  .row {
    position: relative;
    display: grid;
    grid-template-columns: 150px 198px 1fr;
    align-items: center;
    height: 35px;
    color: #f4f5f7;
    font-weight: 500;
    text-align: right;
  }

  .row .price {
    font-size: 20px;
    font-weight: 400;
    text-align: left;
  }

  .row i {
    position: absolute;
    top: 0;
    right: 0;
    height: 100%;
  }

  .ask .price {
    color: #e0525f;
  }

  .bid .price {
    color: #5cb176;
  }

  .ask i {
    background: rgba(230, 95, 115, 0.15);
  }

  .bid i {
    background: rgba(100, 185, 145, 0.15);
  }

  .row.head {
    margin: 14px 10px 11px 28px;
    color: #7f8490;
    font-weight: 400;
  }

  .head span:first-child {
    text-align: left;
  }

  .rows {
    display: flex;
    flex-direction: column;
    gap: 1.73px;
    margin: 0 10px 0 28px;
  }

  .mid-price {
    display: flex;
    align-items: center;
    height: 56px;
    margin-left: 28px;
  }

  .mid-price strong {
    width: 141px;
    color: #5cb176;
    font-size: 32px;
    font-weight: 600;
  }

  .mid-price path {
    fill: none;
    stroke: #5cb176;
    stroke-width: 2.5;
  }

  .mid-price span {
    margin: 3px 0 0 13px;
    padding-bottom: 3px;
    border-bottom: 1px dotted #6a6e78;
    font-size: 20px;
  }

  .ratio {
    display: flex;
    gap: 3px;
    height: 35px;
    margin: 21px 10px 0 28px;
    color: #f4f5f7;
  }

  .ratio div {
    display: flex;
    align-items: center;
    padding: 2px;
    box-sizing: border-box;
  }

  .buy-side {
    width: 293px;
    border-radius: 4px 0 0 4px;
    background: #24362c;
    clip-path: polygon(0 0, 289px 0, 100% 100%, 0 100%);
  }

  .sell-side {
    flex: 1;
    border-radius: 0 4px 4px 0;
    background: #3e1f27;
    clip-path: polygon(0 0, 100% 0, 100% 100%, 6px 100%);
  }

  .ratio b {
    width: 31px;
    border-radius: 2px;
    background: #111215;
    font-weight: 500;
    line-height: 31px;
    text-align: center;
  }

  .ratio span {
    flex: 1;
    font-weight: 500;
    text-align: center;
  }

  .buy-side span {
    padding-right: 30px;
  }

  .sell-side span {
    padding-left: 34px;
  }

  .watermark {
    position: absolute;
    right: 8px;
    bottom: 8px;
    display: flex;
    align-items: center;
    gap: 6px;
    color: #d2d4d8;
    font-family: 'Noto Sans', sans-serif;
    font-size: 23.8px;
    line-height: 34px;
    white-space: nowrap;
    text-shadow: 0 1px 2px rgba(0, 0, 0, 0.8);
  }

  .watermark svg {
    fill: #d2d4d8;
  }
</style>
